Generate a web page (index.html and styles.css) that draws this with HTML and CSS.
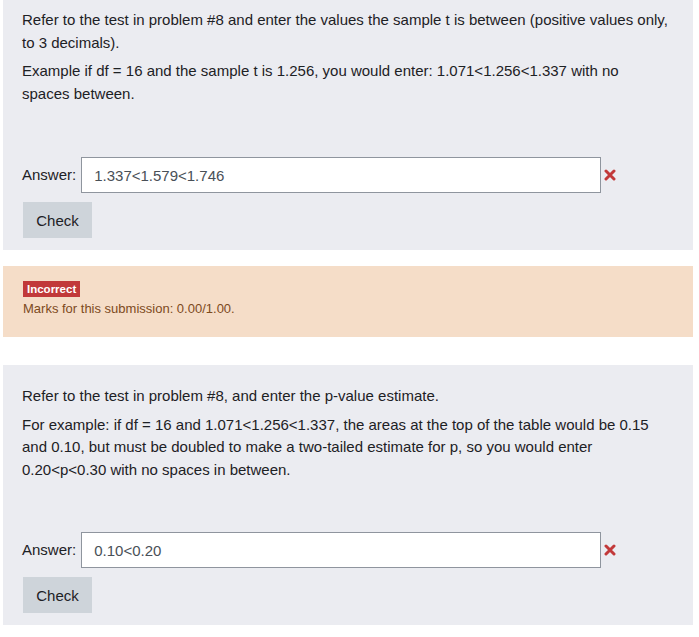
FILE: index.html
```html
<!DOCTYPE html>
<html lang="en">
<head>
  <meta charset="UTF-8">
  <title>Quiz review</title>
  <link rel="stylesheet" href="styles.css">
</head>
<body>

  <div class="formulation first">
    <p>Refer to the test in problem #8 and enter the values the sample t is between (positive values only, to 3 decimals).</p>
    <p>Example if df = 16 and the sample t is 1.256, you would enter: 1.071&lt;1.256&lt;1.337 with no spaces between.</p>

    <div class="ablock">
      <label for="ans1">Answer:</label>
      <input type="text" id="ans1" value="1.337<1.579<1.746" readonly>
      <svg class="mark" width="12" height="12" viewBox="0 0 12 12">
        <path d="M2 2 L10 10 M10 2 L2 10" stroke="#c2393a" stroke-width="3" stroke-linecap="round"/>
      </svg>
    </div>
    <button class="check">Check</button>
  </div>

  <div class="outcome">
    <div class="state"><span class="badge">Incorrect</span></div>
    <div class="marks">Marks for this submission: 0.00/1.00.</div>
  </div>

  <div class="formulation second">
    <p>Refer to the test in problem #8, and enter the p-value estimate.</p>
    <p>For example: if df = 16 and 1.071&lt;1.256&lt;1.337, the areas at the top of the table would be 0.15 and 0.10, but must be doubled to make a two-tailed estimate for p, so you would enter 0.20&lt;p&lt;0.30 with no spaces in between.</p>

    <div class="ablock">
      <label for="ans2">Answer:</label>
      <input type="text" id="ans2" value="0.10<0.20" readonly>
      <svg class="mark" width="12" height="12" viewBox="0 0 12 12">
        <path d="M2 2 L10 10 M10 2 L2 10" stroke="#c2393a" stroke-width="3" stroke-linecap="round"/>
      </svg>
    </div>
    <button class="check">Check</button>
  </div>

</body>
</html>
```

FILE: styles.css
```css
body {
  margin: 0;
  padding: 0 6px 0 3px;
  font-family: 'Liberation Sans', Arial, sans-serif;
  font-size: 15px;
  line-height: 1.5;
  color: #1d2125;
  background: #fff;
}

.formulation {
  background-color: #ebecf1;
  padding: 9px 24px 12px 19px;
}

.second {
  margin-top: 28px;
  padding-top: 20px;
}

.formulation p {
  margin: 0 0 6px 0;
}

.ablock {
  display: flex;
  align-items: center;
  margin-top: 52px;
}

.second .ablock {
  margin-top: 51px;
}

.ablock label {
  margin-right: 5px;
}

.ablock input {
  width: 520px;
  height: 36px;
  box-sizing: border-box;
  border: 1px solid #8f959e;
  padding: 0 12px;
  font-family: inherit;
  font-size: 15px;
  color: #495057;
  background: #fff;
  outline: none;
}

.mark {
  margin-left: 3px;
}

.check {
  display: block;
  margin-top: 9px;
  margin-left: 1px;
  width: 69px;
  height: 36px;
  border: none;
  background-color: #ced4da;
  color: #1d2125;
  font-family: inherit;
  font-size: 15px;
  padding: 0;
}

.outcome {
  margin-top: 16px;
  background-color: #f5ddc8;
  padding: 15px 20px 18px 20px;
  color: #7d4a1d;
}

.state {
  line-height: 16px;
  height: 16px;
}

.badge {
  display: inline-block;
  vertical-align: top;
  background-color: #c1393a;
  color: #fff;
  font-weight: bold;
  font-size: 11.5px;
  line-height: 16px;
  padding: 0 4px;
}

.marks {
  font-size: 13px;
  line-height: 20px;
  margin-top: 2px;
}
```
